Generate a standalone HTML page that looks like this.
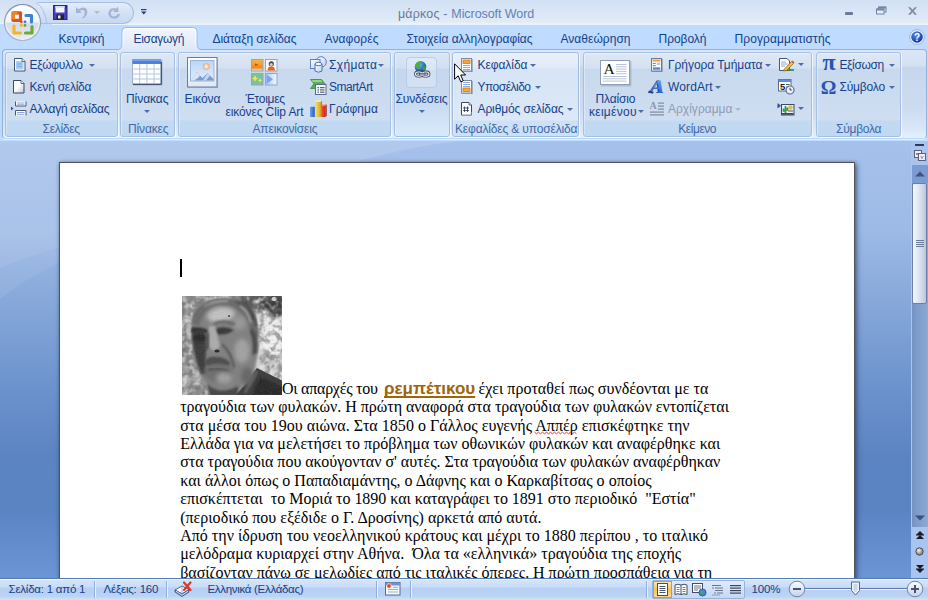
<!DOCTYPE html>
<html><head><meta charset="utf-8">
<style>
*{margin:0;padding:0;box-sizing:border-box}
html,body{width:928px;height:600px;overflow:hidden;background:#bfdbff;font-family:"Liberation Sans",sans-serif;font-size:12px;color:#15428b}
.abs{position:absolute}
#title{position:absolute;left:0;top:0;width:928px;height:25px;background:linear-gradient(#d2e0f4 0,#d8e5f6 10px,#e1ebf8 22px,#ecf3fb 24px,#ecf3fb 25px)}
#titletxt{position:absolute;left:0;width:928px;top:6px;text-align:center;font-size:12.5px;color:#5b6f8f;padding-left:2px}
#tabs{position:absolute;left:0;top:25px;width:928px;height:25px;background:#bfdbff}
.tab{position:absolute;top:6px;font-size:12px;color:#15428b;white-space:nowrap}
#acttab{position:absolute;left:122px;top:27px;width:75px;height:23px;border:1px solid #8db2e3;border-bottom:none;border-radius:4px 4px 0 0;background:linear-gradient(#f4f8fd,#dfe9f6)}
#ribbon{position:absolute;left:2px;top:49px;width:925px;height:90px;border:1px solid #8db2e3;border-bottom-color:#b9d9f5;border-radius:4px;background:linear-gradient(#dbe6f5 0,#d4e1f2 16px,#c6d7ed 17px,#ccdbf0 58px,#d8e6f7 78px,#e4f1fd 89px);box-shadow:0 1px 0 #dff1ff}
.grp{position:absolute;top:52px;height:85px;border:1px solid #a5c0e2;border-radius:3px;background:linear-gradient(#dee8f5 0,#d4e1f2 15px,#c8d9ee 16px,#cfdef1 67px,#c2d9f2 68px,#c0d8f1 85px);box-shadow:1px 1px 0 rgba(255,255,255,.65), inset 1px 1px 0 rgba(255,255,255,.35)}
.glab{position:absolute;left:0;right:0;bottom:0;height:15px;line-height:15px;text-align:center;font-size:12px;color:#3e6aaa;white-space:nowrap}
.t{position:absolute;white-space:nowrap;font-size:12px;color:#15428b;line-height:14px}
.arr{position:absolute;width:0;height:0;border-left:3px solid transparent;border-right:3px solid transparent;border-top:3.5px solid #4b6ea9}
#doc{position:absolute;left:0;top:141px;width:928px;height:437px;background:linear-gradient(#a6c1eb 0,#9dbae6 90px,#87a8da 160px,#6e94ce 240px,#5c84c2 315px,#5b84c4 370px,#6b95d5 437px);overflow:hidden}
#page{position:absolute;left:59px;top:21px;width:796px;height:430px;background:#fff;border:1px solid #505358;box-shadow:2px 2px 5px rgba(30,50,90,.6),0 0 3px rgba(30,50,90,.3)}
.ln{position:absolute;left:180px;white-space:pre;font-family:"Liberation Serif",serif;font-size:16px;color:#000;line-height:18px;word-spacing:0px}
#status{position:absolute;left:0;top:578px;width:928px;height:22px;background:linear-gradient(#eef5fd 0,#eef5fd 1px,#d5e5f9 1px,#c9dcf6 8px,#b6cff2 9px,#bad3f4 17px,#d2e3f8 21px);border-top:1px solid #567db1}
.st{position:absolute;top:4px;font-size:11.5px;color:#15428b;white-space:nowrap}
</style></head><body>
<div id="title"></div>
<div id="tabs"></div>
<!-- QAT pill -->
<div class="abs" style="left:38px;top:2px;width:96px;height:22px;border:1px solid #a3bfe6;border-left:none;border-radius:0 11px 11px 0;background:linear-gradient(#e4edf9,#d2e1f5 50%,#c6d9f2)"></div>
<!-- office button notch -->
<div class="abs" style="left:0;top:24px;width:52px;height:26px;background:#bfdbff"></div>
<svg class="abs" style="left:0;top:0" width="60" height="52" viewBox="0 0 60 52">
<defs>
<linearGradient id="ob" x1="0" y1="0" x2="0" y2="1"><stop offset="0" stop-color="#ffffff"/><stop offset=".48" stop-color="#f1f4f9"/><stop offset=".52" stop-color="#d3dbe8"/><stop offset="1" stop-color="#e6ebf3"/></linearGradient>
<linearGradient id="obr" x1="0" y1="0" x2="0" y2="1"><stop offset="0" stop-color="#7f8ca3"/><stop offset="1" stop-color="#aab6ca"/></linearGradient>
</defs>
<path d="M36 2.500 Q45 8 47 24" fill="none" stroke="#a9c2e6" stroke-width="1"/>
<circle cx="22.500" cy="22.500" r="18.600" fill="url(#obr)"/>
<circle cx="22.500" cy="22.500" r="17.400" fill="#f4f6fa"/>
<circle cx="22.500" cy="22.500" r="16.300" fill="url(#ob)"/>
<g fill="none" stroke-width="3.200" stroke-linejoin="round" stroke-linecap="round">
<path d="M13 12.800 h7.500 v7.500 h-7.500z" stroke="#d9531e"/>
<path d="M26 15.500 h5.500 v6.500" stroke="#3d84cc"/>
<path d="M14 26 v7 h6.500" stroke="#f3b52c"/>
<path d="M25.500 33 h6.500 v-6.500" stroke="#6aa93b"/>
</g>
<path d="M12.200 12 h5 v2.500 h-2.300 v5 h-2.700z" fill="#ef8a1e"/>
<circle cx="21.300" cy="21.800" r="1.400" fill="#e64a19"/><circle cx="25" cy="21.800" r="1.400" fill="#2f7fd0"/>
<circle cx="21.300" cy="25.400" r="1.400" fill="#f5b400"/><circle cx="25" cy="25.400" r="1.400" fill="#5fa534"/>
</svg>
<!-- save -->
<svg class="abs" style="left:53px;top:5px" width="15" height="15" viewBox="0 0 15 15">
<rect x=".5" y=".5" width="13.500" height="14" fill="#4b3fbf" stroke="#2c2486" stroke-width="1"/>
<rect x="2.500" y="1" width="9" height="6.500" fill="#f4f6fb"/><rect x="2.500" y="1" width="9" height="2" fill="#d9dff0"/>
<rect x="3.500" y="9.500" width="7.500" height="5" fill="#22232e"/><rect x="5" y="10.500" width="2.500" height="3" fill="#e8e8f0"/>
<rect x="12" y="1.500" width="1.300" height="2" fill="#2a2280"/>
</svg>
<!-- undo (disabled) -->
<svg class="abs" style="left:75px;top:6px" width="14" height="13" viewBox="0 0 14 13">
<path d="M1 1 L1 7 L7 7 L4.800 4.900 Q8.500 2.500 9.600 5.800 Q10.300 9 7 12 L8.800 12.400 Q13.500 8.500 12 4 Q9.800 -0.500 3.300 3.300Z" fill="#a3b5d3"/>
</svg>
<div class="arr" style="left:94px;top:11px;border-top-color:#b3b9c6"></div>
<!-- redo (disabled) -->
<svg class="abs" style="left:107px;top:6px" width="14" height="13" viewBox="0 0 14 13">
<path d="M11 0.500 L11.500 6 L6 6 L8 4.300 Q4.500 3.500 3.800 7 Q3.800 10.500 7.200 10.500 Q10 10.300 10.500 8 L13 8 Q12.300 12.800 7 12.800 Q1.300 12.300 1.300 7 Q2.200 1 9.300 2.400Z" fill="#a3b5d3"/>
</svg>
<!-- customize -->
<svg class="abs" style="left:140px;top:8px" width="8" height="8" viewBox="0 0 8 8"><rect x="1" y="1" width="5.500" height="1.200" fill="#1e3f7b"/><path d="M1 3.500 h5.500 l-2.750 3z" fill="#1e3f7b"/></svg>
<!-- window controls -->
<div class="abs" style="left:845px;top:12px;width:8px;height:3px;background:#6a7b98;border-radius:1px"></div>
<svg class="abs" style="left:875px;top:6px" width="12" height="9" viewBox="0 0 12 9">
<rect x="3.500" y="1" width="7.500" height="5" fill="none" stroke="#7385a3" stroke-width="1"/><rect x="3.500" y=".7" width="7.500" height="1.800" fill="#7385a3"/>
<rect x="1.500" y="3" width="7.500" height="5" fill="#e3ecf8" stroke="#7385a3" stroke-width="1"/><rect x="1.500" y="2.700" width="7.500" height="1.800" fill="#7385a3"/>
</svg>
<svg class="abs" style="left:907px;top:6px" width="11" height="10" viewBox="0 0 11 10">
<path d="M1 1.200 L3.400 1.200 L5.500 3.800 L7.600 1.200 L10 1.200 L6.700 5 L10 8.800 L7.600 8.800 L5.500 6.200 L3.400 8.800 L1 8.800 L4.300 5Z" fill="#7f8ca5"/>
</svg>
<!-- help -->
<svg class="abs" style="left:909px;top:29px" width="16" height="16" viewBox="0 0 16 16">
<defs><radialGradient id="hg" cx="40%" cy="30%" r="70%"><stop offset="0" stop-color="#5b8ef0"/><stop offset="1" stop-color="#12349a"/></radialGradient></defs>
<circle cx="8" cy="8" r="7.300" fill="#f5f8fd" stroke="#8aa3cf" stroke-width=".8"/><circle cx="8" cy="8" r="5.800" fill="url(#hg)"/>
<text x="8" y="11.600" font-family="Liberation Sans" font-weight="bold" font-size="10" text-anchor="middle" fill="#fff">?</text>
</svg>

<div id="ribbon"></div>
<svg class="abs" style="left:116px;top:25px" width="88" height="27" viewBox="0 0 88 27">
<defs><linearGradient id="tg" x1="0" y1="0" x2="0" y2="1"><stop offset="0" stop-color="#f3f7fd"/><stop offset=".5" stop-color="#e7eef9"/><stop offset="1" stop-color="#dbe6f5"/></linearGradient></defs>
<path d="M1.500 25 Q5.500 24.500 6 20 V6.500 Q6 2.500 10 2.500 H77 Q81 2.500 81 6.500 V20 Q81.500 24.500 85.500 25 V27 H1.500Z" fill="url(#tg)"/>
<path d="M1.500 25 Q5.500 24.500 6 20 V6.500 Q6 2.500 10 2.500 H77 Q81 2.500 81 6.500 V20 Q81.500 24.500 85.500 25" fill="none" stroke="#97bae8" stroke-width="1"/>
<path d="M7.200 21 V7 Q7.200 3.700 10.500 3.700 H76.500 Q79.800 3.700 79.800 7 V21" fill="none" stroke="#ffffff" stroke-width="1" opacity=".8"/>
</svg>
<!-- groups -->
<div class="grp" id="g1" style="left:5px;width:113px"></div>
<div class="grp" id="g2" style="left:120px;width:55px"></div>
<div class="grp" id="g3" style="left:178px;width:213px"></div>
<div class="grp" id="g4" style="left:394px;width:56px;background:linear-gradient(#dbe6f5 0,#d2e0f2 15px,#c5d7ee 16px,#c8daf0 50px,#d9ebfb 85px);border-color:#9fc0e4"></div>
<div class="grp" id="g5" style="left:452px;width:127px;background:linear-gradient(#e9f0fa 0,#e0eaf7 15px,#d6e4f5 16px,#dce8f7 67px,#cfe0f6 68px,#cde0f6 85px);border-color:#a0bde0"></div>
<div class="grp" id="g6" style="left:583px;width:229px"></div>
<div class="grp" id="g7" style="left:816px;width:85px"></div>
<!-- cover page -->
<svg class="abs" style="left:14px;top:58px" width="12" height="14" viewBox="0 0 12 14">
<path d="M.5 .5 H8 L11 3.500 V13 H.5Z" fill="#fff" stroke="#44546f" stroke-width="1"/>
<rect x="2" y="3" width="7.500" height="8.500" fill="#a9cdf6"/><rect x="3" y="5.500" width="5" height="1" fill="#7fa9dd"/><rect x="3" y="8" width="5" height="1" fill="#7fa9dd"/>
<path d="M8 .5 V3.500 H11" fill="#e8eef8" stroke="#44546f" stroke-width=".8"/>
</svg>
<!-- blank page -->
<svg class="abs" style="left:13px;top:80px" width="12" height="14" viewBox="0 0 12 14">
<defs><linearGradient id="bp" x1="0" y1="0" x2="1" y2="1"><stop offset=".45" stop-color="#fff"/><stop offset="1" stop-color="#bcc5d6"/></linearGradient></defs>
<path d="M.5 .5 H8 L11 3.500 V13 H.5Z" fill="url(#bp)" stroke="#3d4960" stroke-width="1"/>
<path d="M8 .5 V3.500 H11" fill="#f4f6fa" stroke="#3d4960" stroke-width=".8"/>
</svg>
<!-- page break -->
<svg class="abs" style="left:10px;top:101px" width="18" height="15" viewBox="0 0 18 15">
<path d="M1 5.500 L3.500 7.500 L1 9.500Z" fill="#2b4fa8"/>
<path d="M5.500 .5 V5 H16 V.5" fill="#fff" stroke="#4a5875" stroke-width="1"/>
<rect x="7" y="1.500" width="7.500" height="1" fill="#8da6d6"/><rect x="7" y="3.300" width="7.500" height="1" fill="#8da6d6"/>
<path d="M5.500 14.500 V9.500 H16 V14.500" fill="#fff" stroke="#4a5875" stroke-width="1"/>
<rect x="7" y="11" width="7.500" height="1" fill="#8da6d6"/><rect x="7" y="12.800" width="7.500" height="1" fill="#8da6d6"/>
</svg>
<div class="arr" style="left:89px;top:64px"></div>
<!-- table -->
<svg class="abs" style="left:132px;top:59px" width="31" height="27" viewBox="0 0 31 27">
<rect x="1.500" y="1.500" width="29" height="25" fill="#5f6f8e" opacity=".35"/>
<rect x=".5" y=".5" width="28.500" height="24.500" fill="#fdfeff" stroke="#9fb0cc" stroke-width="1"/>
<rect x=".5" y=".5" width="28.500" height="4.500" fill="#4d7fdc"/><rect x=".5" y=".5" width="28.500" height="1.500" fill="#7ba3ea"/>
<g stroke="#b8c6de" stroke-width="1"><path d="M7.700 5 V25 M14.900 5 V25 M22.100 5 V25 M.5 10 H29 M.5 15 H29 M.5 20 H29"/></g>
<path d="M29.300 3 V25.300 H1" fill="none" stroke="#2f3f60" stroke-width="1"/>
</svg>
<div class="arr" style="left:143.500px;top:110px"></div>
<!-- picture -->
<svg class="abs" style="left:186px;top:56px" width="33" height="33" viewBox="0 0 33 33">
<defs><linearGradient id="sky" x1="0" y1="0" x2="0" y2="1"><stop offset="0" stop-color="#b9d6f8"/><stop offset="1" stop-color="#e2effc"/></linearGradient>
<radialGradient id="sun"><stop offset="0" stop-color="#fff6e6"/><stop offset=".6" stop-color="#fbd3b0"/><stop offset="1" stop-color="#ee9a6a"/></radialGradient>
<linearGradient id="fr" x1="0" y1="0" x2="0" y2="1"><stop offset="0" stop-color="#ffffff"/><stop offset="1" stop-color="#dfe8f5"/></linearGradient></defs>
<rect x="2" y="2" width="30" height="30" fill="#5a6c8e" opacity=".3"/>
<rect x="1.500" y="1.500" width="29.500" height="29.500" fill="url(#fr)" stroke="#6c7c99" stroke-width="1"/>
<rect x="4.500" y="4.500" width="23.500" height="20.500" fill="url(#sky)" stroke="#9db3d6" stroke-width="1"/>
<path d="M5 24.500 L11 16 L14 19.500 L16.500 22 L21.500 17 L27.500 23 V24.500Z" fill="#7d9bd0"/>
<path d="M11 16 L14 19.500 L12 22 L8 24.500 H5Z" fill="#d9e5f6"/><path d="M21.500 17 L24 19.500 L20 24.500 H17Z" fill="#c4d5f0"/>
<circle cx="20.300" cy="10.500" r="3.300" fill="url(#sun)"/>
</svg>
<!-- clip art -->
<svg class="abs" style="left:251px;top:59px" width="27" height="27" viewBox="0 0 27 27">
<defs><linearGradient id="ca1" x1="0" y1="0" x2="0" y2="1"><stop offset="0" stop-color="#f8b84a"/><stop offset=".7" stop-color="#f08a1a"/><stop offset="1" stop-color="#fbe3b8"/></linearGradient>
<linearGradient id="ca4" x1="0" y1="0" x2="1" y2="0"><stop offset="0" stop-color="#a9c6f5"/><stop offset="1" stop-color="#f4f8ff"/></linearGradient></defs>
<g stroke="#97a6bf" stroke-width="1">
<rect x=".5" y=".5" width="11.500" height="11.500" fill="url(#ca1)"/>
<rect x="14.500" y=".5" width="11.500" height="11.500" fill="#fbfcfe"/>
<rect x=".5" y="14.500" width="11.500" height="11.500" fill="#79c29a"/>
<rect x="14.500" y="14.500" width="11.500" height="11.500" fill="url(#ca4)"/></g>
<path d="M4 4.500 L7.500 6 L4 7Z" fill="#c9460e"/>
<circle cx="20.300" cy="4.800" r="2.600" fill="#4a4a4a"/><path d="M16.500 11.500 Q16.500 7.500 20.300 7.500 Q24 7.500 24 11.500Z" fill="#e8651c"/><circle cx="20.300" cy="5.500" r="1.500" fill="#f0c9a8"/>
<path d="M4 16 l1 2.500 2.500 1 -2.500 1 -1 2.500 -1 -2.500 -2 -1 2 -1z M9 19 l.7 1.500 1.500 .7 -1.500 .7 -.7 1.500 -.7 -1.500 -1.500 -.7 1.500 -.7z" fill="#f6e45a"/>
<path d="M15.500 15.500 L22 20.300 L15.500 25Z" fill="#7fa4ea"/>
</svg>
<!-- shapes -->
<svg class="abs" style="left:309px;top:56px" width="19" height="18" viewBox="0 0 19 18">
<defs><linearGradient id="sh" x1="0" y1="0" x2="1" y2="1"><stop offset="0" stop-color="#ffffff"/><stop offset="1" stop-color="#bcd2f2"/></linearGradient></defs>
<circle cx="12" cy="6" r="5.300" fill="url(#sh)" stroke="#5d82bd" stroke-width="1"/>
<rect x="1.500" y="3.500" width="9.500" height="9" fill="url(#sh)" stroke="#5d82bd" stroke-width="1"/>
<path d="M6 8 V15 Q9.500 17.500 13 15 V8" fill="url(#sh)" stroke="#4f74b2" stroke-width="1"/>
<ellipse cx="9.500" cy="8" rx="3.500" ry="1.700" fill="#f5f9ff" stroke="#4f74b2" stroke-width="1"/>
</svg>
<div class="arr" style="left:378px;top:64px"></div>
<!-- smartart -->
<svg class="abs" style="left:310px;top:79px" width="17" height="16" viewBox="0 0 17 16">
<path d="M.5 .5 H11.500 L15 4.800 L11.500 9.500 H.5 L4 4.800Z" fill="#58b055" stroke="#3a8a3a" stroke-width=".8"/>
<path d="M1.500 1 H11 L12.500 3 H3Z" fill="#8fd488"/>
<rect x="5.500" y="5.500" width="10.500" height="10" fill="#f2f6fb" stroke="#5b6b85" stroke-width="1"/>
<g fill="#56657f"><rect x="7.500" y="8" width="1.500" height="1.200"/><rect x="10" y="8" width="4.500" height="1.200"/><rect x="7.500" y="10.300" width="1.500" height="1.200"/><rect x="10" y="10.300" width="4.500" height="1.200"/><rect x="7.500" y="12.600" width="1.500" height="1.200"/><rect x="10" y="12.600" width="4.500" height="1.200"/></g>
</svg>
<!-- chart -->
<svg class="abs" style="left:309px;top:100px" width="18" height="18" viewBox="0 0 18 18">
<defs><linearGradient id="cb" x1="0" y1="0" x2="1" y2="0"><stop offset="0" stop-color="#6aa4ee"/><stop offset="1" stop-color="#1f5fc0"/></linearGradient>
<linearGradient id="cy" x1="0" y1="0" x2="1" y2="0"><stop offset="0" stop-color="#fbe07a"/><stop offset="1" stop-color="#e0a510"/></linearGradient>
<linearGradient id="cr" x1="0" y1="0" x2="1" y2="0"><stop offset="0" stop-color="#f4674a"/><stop offset="1" stop-color="#c42616"/></linearGradient></defs>
<rect x="1" y="7" width="4.800" height="10" fill="url(#cb)"/><path d="M1 7 l1.200 -1.200 h4.800 l-1.200 1.200z" fill="#a6c8f6"/>
<rect x="11.500" y="5.500" width="5" height="11.500" fill="url(#cr)"/><path d="M11.500 5.500 l1.200 -1.300 h4.800 l-1.200 1.300z" fill="#f99c86"/><path d="M16.500 5.500 l1.200 -1.300 v11.500 l-1.200 1.300z" fill="#a01c10"/>
<rect x="6" y="1.800" width="5.800" height="15.200" fill="url(#cy)"/><path d="M6 1.800 l1.200 -1.300 h5.800 l-1.200 1.300z" fill="#fdf0b0"/><path d="M11.800 1.800 l1.200 -1.300 v15 l-1.200 1.500z" fill="#b98508"/>
</svg>

<!-- links button -->
<div class="abs" style="left:406px;top:57px;width:31px;height:31px;border:1px solid #bacde6;border-radius:4px;background:linear-gradient(#e0eaf7 0,#dae6f5 11px,#d0dff2 12px,#d3e1f3 31px)"></div>
<svg class="abs" style="left:412px;top:60px" width="20" height="19" viewBox="0 0 20 19">
<defs><radialGradient id="gl" cx="35%" cy="30%" r="75%"><stop offset="0" stop-color="#8ec8ff"/><stop offset=".6" stop-color="#2d6fd0"/><stop offset="1" stop-color="#173f8e"/></radialGradient></defs>
<circle cx="8.500" cy="6.800" r="5.800" fill="url(#gl)"/>
<path d="M4.500 3 Q7 .8 9.500 1.300 L10.500 3.500 L8 5 L8.500 7.500 L6 9.500 L4 7 L3 5Z" fill="#4bb13c"/><path d="M11 6.500 L13.500 6 L14 8.500 L12 11 L10.500 9Z" fill="#3fa032"/>
<g fill="none" stroke="#3c4252" stroke-width="2.800"><rect x="3.500" y="12" width="6.500" height="4.200" rx="2.100"/><rect x="10.500" y="12" width="6.500" height="4.200" rx="2.100"/></g>
<g fill="none" stroke="#e8ecf3" stroke-width="1.200"><rect x="3.500" y="12" width="6.500" height="4.200" rx="2.100"/><rect x="10.500" y="12" width="6.500" height="4.200" rx="2.100"/></g>
<rect x="7.500" y="13.300" width="5.500" height="1.600" fill="#d5dae4" stroke="#3c4252" stroke-width=".6"/>
</svg>
<div class="arr" style="left:418.500px;top:110px"></div>
<!-- header -->
<svg class="abs" style="left:461px;top:58px" width="12" height="14" viewBox="0 0 12 14">
<rect x="1" y="1" width="10.800" height="13" fill="#56657f" opacity=".5"/>
<rect x=".5" y=".5" width="10" height="12.500" fill="#fff" stroke="#7a89a5" stroke-width="1"/>
<rect x="2" y="2" width="7" height="3.500" fill="#f6a63a" stroke="#d07a10" stroke-width=".8"/>
<g fill="#8fa9d8"><rect x="2" y="7" width="7" height="1"/><rect x="2" y="9" width="7" height="1"/><rect x="2" y="11" width="7" height="1"/></g>
</svg>
<!-- footer -->
<svg class="abs" style="left:461px;top:80px" width="12" height="14" viewBox="0 0 12 14">
<rect x="1" y="1" width="10.800" height="13" fill="#56657f" opacity=".5"/>
<rect x=".5" y=".5" width="10" height="12.500" fill="#fff" stroke="#7a89a5" stroke-width="1"/>
<rect x="2" y="8" width="7" height="3.500" fill="#f6a63a" stroke="#d07a10" stroke-width=".8"/>
<g fill="#8fa9d8"><rect x="2" y="2" width="7" height="1"/><rect x="2" y="4" width="7" height="1"/><rect x="2" y="6" width="7" height="1"/></g>
</svg>
<!-- page number -->
<svg class="abs" style="left:461px;top:102px" width="12" height="14" viewBox="0 0 12 14">
<path d="M.5 .5 H8 L10.500 3 V13 H.5Z" fill="#fff" stroke="#3d4960" stroke-width="1"/>
<path d="M8 .5 V3 H10.500" fill="#e8eef8" stroke="#3d4960" stroke-width=".8"/>
<g stroke="#2a3550" stroke-width=".8" fill="none"><path d="M3.500 4.500 V10 M6.500 4.500 V10 M2 6 H8 M2 8.500 H8"/></g>
<path d="M1 12.500 H10 V10" fill="none" stroke="#c3ccdb" stroke-width="1"/>
</svg>
<div class="arr" style="left:530px;top:64px"></div>
<div class="arr" style="left:534.500px;top:86px"></div>
<div class="arr" style="left:566.500px;top:108px"></div>
<!-- text box -->
<svg class="abs" style="left:599px;top:59px" width="33" height="28" viewBox="0 0 33 28">
<rect x="2" y="2" width="30.500" height="25.500" fill="#5a6c8e" opacity=".28"/>
<rect x="1.500" y="1.500" width="29" height="24" fill="#fff" stroke="#8e9cb5" stroke-width="1"/>
<text x="4.500" y="15" font-family="Liberation Serif" font-size="15.500" fill="#111">A</text>
<g fill="#b9c5da"><rect x="17" y="5" width="10.500" height="1"/><rect x="17" y="7.300" width="10.500" height="1"/><rect x="17" y="9.600" width="10.500" height="1"/><rect x="17" y="11.900" width="10.500" height="1"/><rect x="17" y="14.200" width="10.500" height="1"/>
<rect x="4" y="17" width="23.500" height="1"/><rect x="4" y="19.300" width="23.500" height="1"/><rect x="4" y="21.600" width="23.500" height="1"/></g>
</svg>
<div class="arr" style="left:637.500px;top:110px"></div>
<!-- quick parts -->
<svg class="abs" style="left:651px;top:58px" width="12" height="14" viewBox="0 0 12 14">
<rect x="1" y="1" width="10.800" height="13" fill="#56657f" opacity=".5"/>
<rect x=".5" y=".5" width="10" height="12.500" fill="#fff" stroke="#6c7a95" stroke-width="1"/>
<rect x="1.500" y="1.500" width="8" height="2" fill="#f79a2c"/>
<rect x="1.800" y="4.800" width="3" height="1.200" fill="#6d8fd0"/><rect x="5.800" y="4.500" width="3.500" height="2.600" fill="#b7c9ea"/>
<rect x="1.800" y="7" width="3" height="1.200" fill="#6d8fd0"/><rect x="1.800" y="9.300" width="7.500" height="2.500" fill="#5b8ae0"/>
</svg>
<div class="arr" style="left:765px;top:64px"></div>
<!-- wordart -->
<svg class="abs" style="left:647px;top:77px" width="20" height="19" viewBox="0 0 20 19">
<defs><linearGradient id="wa" x1="0" y1="0" x2="0" y2="1"><stop offset="0" stop-color="#7fb0f5"/><stop offset="1" stop-color="#1d53b8"/></linearGradient></defs>
<g transform="skewX(-14)">
<text x="5.200" y="16.300" font-family="Liberation Serif" font-weight="bold" font-size="19" fill="#173f92">A</text>
<text x="6.200" y="15.800" font-family="Liberation Serif" font-weight="bold" font-size="19" fill="url(#wa)">A</text>
</g>
<path d="M2 13.500 L6.500 14.800 L5.800 16.800 L1 15.500Z" fill="#1a469c"/>
</svg>
<div class="arr" style="left:715px;top:86px"></div>
<!-- drop cap (disabled) -->
<svg class="abs" style="left:649px;top:101px" width="16" height="15" viewBox="0 0 16 15">
<text x=".5" y="8" font-family="Liberation Serif" font-weight="bold" font-size="10" fill="#8b97ad">A</text>
<g fill="#7d8aa3"><rect x="9" y="1.500" width="6" height="1.200"/><rect x="9" y="4.500" width="6" height="1.200"/><rect x="9" y="7.500" width="6" height="1.200"/><rect x="1" y="10.500" width="14" height="1.200"/><rect x="1" y="13.300" width="14" height="1.200"/></g>
</svg>
<div class="arr" style="left:735px;top:108px;border-top-color:#aab6cb"></div>
<!-- signature line -->
<svg class="abs" style="left:779px;top:58px" width="16" height="14" viewBox="0 0 16 14">
<path d="M.5 .5 H8 L10.500 3 V12.500 H.5Z" fill="#fff" stroke="#4a5875" stroke-width="1"/>
<g fill="#9aa8c2"><rect x="2" y="3.500" width="5" height="1"/><rect x="2" y="5.500" width="6.500" height="1"/><rect x="2" y="7.500" width="4" height="1"/></g>
<path d="M5 11.500 L12.500 3.500 L14.500 5.500 L7.500 12.500 L4.500 13Z" fill="#f3c23c" stroke="#7a5a10" stroke-width=".7"/>
<path d="M12.500 3.500 L13.500 2.500 L15.500 4.500 L14.500 5.500Z" fill="#d6534a"/>
<path d="M9 12 L15 12" stroke="#2e8a3a" stroke-width="1.600"/>
</svg>
<div class="arr" style="left:797.500px;top:63px"></div>
<!-- date & time -->
<svg class="abs" style="left:778px;top:79px" width="17" height="16" viewBox="0 0 17 16">
<rect x=".5" y=".5" width="12.500" height="11.500" fill="#fff" stroke="#5b6b88" stroke-width="1"/>
<rect x=".5" y=".5" width="12.500" height="2.500" fill="#5d8ae0"/>
<text x="2" y="11" font-family="Liberation Sans" font-weight="bold" font-size="9.500" fill="#222">5</text>
<rect x="8" y="5" width="3.500" height="1" fill="#555"/><rect x="8" y="7.500" width="3.500" height="1" fill="#555"/>
<circle cx="12" cy="11" r="4" fill="#e9eef8" stroke="#5a6d94" stroke-width="1.200"/><path d="M12 8.800 V11 H13.800" stroke="#334" stroke-width=".9" fill="none"/>
</svg>
<!-- object -->
<svg class="abs" style="left:777px;top:102px" width="18" height="14" viewBox="0 0 18 14">
<path d="M.5 1 L4 3.800 L.5 6.500Z" fill="#2b4fa8"/>
<rect x="4.500" y="2.500" width="12.500" height="10.500" fill="#eef2f8" stroke="#3c4a66" stroke-width="1"/>
<path d="M8.500 12 V6 M8.500 4 V12 M6.500 6.500 V9 H8.500 M10.500 5.500 V8 H8.500" stroke="#2e9a3c" stroke-width="1.700" fill="none"/>
<circle cx="13.500" cy="5.500" r="1.800" fill="#f5c542" stroke="#b58a10" stroke-width=".5"/>
<rect x="5" y="11" width="11.500" height="1.800" fill="#3c4a66"/><rect x="11" y="8.500" width="5" height="1" fill="#555"/>
</svg>
<div class="arr" style="left:797.500px;top:107px"></div>
<!-- pi & omega -->
<div class="abs" id="pi" style="left:820px;top:52px;width:18px;height:20px;font-family:'Liberation Serif',serif;font-size:24px;line-height:20px;color:#2456b0;text-align:center;font-weight:bold">π</div>
<div class="abs" id="om" style="left:820px;top:77.5px;width:17px;height:20px;font-family:'Liberation Serif',serif;font-size:19.500px;line-height:20px;color:#2456b0;text-align:center;font-weight:bold">Ω</div>
<div class="arr" style="left:888.500px;top:64px"></div>
<div class="arr" style="left:888.500px;top:86px"></div>
<!-- mouse cursor -->
<svg class="abs" style="left:454px;top:63px;z-index:50" width="13" height="20" viewBox="0 0 13 20">
<path d="M.6 .8 V16.200 L4.200 12.800 L6.800 18.800 L9.200 17.800 L6.700 12 H11.600Z" fill="#fff" stroke="#000" stroke-width="1" stroke-linejoin="miter"/>
</svg>

<!-- DOC -->
<div id="doc">
<svg class="abs" style="left:0;top:0" width="928" height="437" viewBox="0 0 928 437">
<path d="M0 0 H462 Q405 6 356 21 Q200 65 59 107 Q25 116 0 127Z" fill="#fff" opacity=".13"/>
<path d="M0 127 Q25 116 59 107 L59 121.500 Q25 138 0 158Z" fill="#fff" opacity=".07"/>
</svg>
 <div id="page"></div>

<svg id="photo" style="position:absolute;left:182px;top:155px" width="100" height="99" viewBox="0 0 100 99">
<defs>
<filter id="b05" x="-30%" y="-30%" width="160%" height="160%"><feGaussianBlur stdDeviation="0.6"/></filter>
<filter id="b1" x="-30%" y="-30%" width="160%" height="160%"><feGaussianBlur stdDeviation="1.1"/></filter>
<filter id="b2" x="-30%" y="-30%" width="160%" height="160%"><feGaussianBlur stdDeviation="2"/></filter>
<filter id="b4" x="-30%" y="-30%" width="160%" height="160%"><feGaussianBlur stdDeviation="3.500"/></filter>
<filter id="nzd" x="0" y="0" width="100%" height="100%"><feTurbulence type="fractalNoise" baseFrequency="0.17" numOctaves="2" seed="3"/><feColorMatrix type="matrix" values="0 0 0 0 0.15  0 0 0 0 0.15  0 0 0 0 0.15  3 3 0 0 -2.7"/></filter>
<filter id="nzl" x="0" y="0" width="100%" height="100%"><feTurbulence type="fractalNoise" baseFrequency="0.15" numOctaves="2" seed="11"/><feColorMatrix type="matrix" values="0 0 0 0 0.95  0 0 0 0 0.95  0 0 0 0 0.95  3 3 0 0 -2.9"/></filter>
<filter id="grain" x="0" y="0" width="100%" height="100%"><feTurbulence type="fractalNoise" baseFrequency="0.55" numOctaves="2" seed="5"/><feColorMatrix type="matrix" values="0 0 0 0 0.2  0 0 0 0 0.2  0 0 0 0 0.2  1.2 1.2 0 0 -1"/></filter>
<clipPath id="pc"><rect width="100" height="99"/></clipPath>
<clipPath id="bgc"><path d="M0 0 H100 V86 L77 72 Q80 40 70 14 Q58 0 35 3 Q12 6 10 24 Q8 50 17 75 Q22 90 32 99 H0Z"/></clipPath>
</defs>
<g clip-path="url(#pc)">
<rect width="100" height="99" fill="#9b9b9b"/>
<!-- light bg right -->
<path d="M72 18 H102 V90 L74 74Z" fill="#e2e2e2" filter="url(#b2)"/>
<ellipse cx="91" cy="42" rx="10" ry="21" fill="#f2f2f2" filter="url(#b2)"/>
<ellipse cx="84" cy="63" rx="6" ry="7" fill="#a6a6a6" filter="url(#b2)"/>
<ellipse cx="96" cy="70" rx="5" ry="6" fill="#b4b4b4" filter="url(#b2)"/>
<!-- left bg -->
<ellipse cx="4" cy="30" rx="6" ry="13" fill="#bdbdbd" filter="url(#b2)"/>
<ellipse cx="4" cy="58" rx="7" ry="9" fill="#858585" filter="url(#b2)"/>
<ellipse cx="8" cy="84" rx="9" ry="10" fill="#a9a9a9" filter="url(#b2)"/>
<ellipse cx="18" cy="95" rx="8" ry="5" fill="#8b8b8b" filter="url(#b2)"/>
<!-- top leaves -->
<rect x="-2" y="-3" width="18" height="12" fill="#8a8a8a" filter="url(#b2)"/>
<rect x="58" y="-4" width="46" height="17" fill="#585858" filter="url(#b2)"/>
<ellipse cx="90" cy="8" rx="12" ry="9" fill="#3c3c3c" filter="url(#b2)"/>
<ellipse cx="95" cy="14" rx="6" ry="8" fill="#3e3e3e" filter="url(#b1)"/>
<ellipse cx="82" cy="17" rx="4" ry="3" fill="#e8e8e8" filter="url(#b1)"/><ellipse cx="74" cy="6" rx="3" ry="2" fill="#dedede" filter="url(#b1)"/><ellipse cx="92" cy="3" rx="2.500" ry="2" fill="#e2e2e2" filter="url(#b05)"/>
<g clip-path="url(#bgc)">
<rect x="0" y="0" width="100" height="99" filter="url(#nzd)" opacity=".6"/>
<rect x="0" y="0" width="100" height="99" filter="url(#nzl)" opacity=".5"/>
</g>
<!-- clothes -->
<path d="M54 99 L63 88 L75 72 L101 85 V99Z" fill="#3c3c3c" filter="url(#b05)"/>
<path d="M70 99 L78 81 L101 91 V99Z" fill="#2a2a2a" filter="url(#b1)"/>
<path d="M63 97 L75 75" stroke="#707070" stroke-width="2" filter="url(#b1)"/>
<!-- head -->
<path d="M10 24 Q12 6 35 3 Q58 0 70 14 Q79 32 76 56 Q73 76 62 90 Q50 100 38 99 Q24 92 17 75 Q8 50 10 24Z" fill="#828282" filter="url(#b1)"/>
<!-- hair -->
<path d="M10 28 Q11 8 32 4 Q52 -1 68 11 L64 18 Q50 8 34 10 Q22 13 17 30Z" fill="#6c6c6c" filter="url(#b1)"/>
<path d="M50 4 Q64 4 71 16 Q77 28 76 42 L68 36 Q67 22 54 12Z" fill="#6a6a6a" filter="url(#b1)"/>
<path d="M54 6 Q66 9 71 24 M60 5 Q72 12 74 30" stroke="#444" stroke-width="1.800" fill="none" filter="url(#b1)"/>
<path d="M58 10 Q66 14 69 27 M22 10 Q32 5 46 5" stroke="#b2b2b2" stroke-width="1.600" fill="none" filter="url(#b1)"/>
<path d="M14 20 Q18 10 28 7" stroke="#6a6a6a" stroke-width="1.600" fill="none" filter="url(#b1)"/>
<!-- forehead -->
<ellipse cx="39" cy="19" rx="14" ry="7.500" fill="#c4c4c4" filter="url(#b2)" transform="rotate(-8 39 19)"/>
<ellipse cx="57" cy="27" rx="7" ry="7" fill="#9a9a9a" filter="url(#b2)"/>
<!-- ear / side hair dark -->
<path d="M70 32 Q77 40 75 57 L70 59 Q72 44 68 36Z" fill="#4a4a4a" filter="url(#b1)"/>
<!-- left face shadow -->
<path d="M10 30 Q14 34 22 36 L25 50 Q22 62 25 78 L19 78 Q9 54 10 30Z" fill="#3e3e3e" filter="url(#b1)"/>
<!-- right cheek -->
<ellipse cx="60" cy="55" rx="7.500" ry="12" fill="#a4a4a4" filter="url(#b2)"/>
<ellipse cx="65" cy="80" rx="6" ry="9" fill="#686868" filter="url(#b2)"/>
<!-- lower face darker -->
<ellipse cx="36" cy="76" rx="14" ry="10" fill="#6e6e6e" filter="url(#b2)"/>
<!-- brows & eyes -->
<path d="M9 33 Q16 29 26 34 L25 38 Q16 34 10 37Z" fill="#303030" filter="url(#b1)"/>
<ellipse cx="18" cy="42" rx="7" ry="4" fill="#2c2c2c" filter="url(#b1)"/>
<path d="M31 27 Q40 21 54 27 L52 30 Q40 26 32 30Z" fill="#6c6c6c" filter="url(#b1)"/>
<path d="M33 33 Q42 29 52 34 Q44 40 35 38Z" fill="#383838" filter="url(#b1)"/>
<circle cx="47" cy="20" r=".9" fill="#333"/>
<!-- nose -->
<path d="M27 30 L33 30 L38 50 Q36 55 30 54 L26 50Z" fill="#aeaeae" filter="url(#b1)"/>
<path d="M24 38 L27 36 L27 52 L23 54Z" fill="#505050" filter="url(#b1)"/>
<ellipse cx="35" cy="55" rx="2.600" ry="1.500" fill="#2c2c2c" filter="url(#b05)"/>
<path d="M40 48 Q50 58 52 72" stroke="#555" stroke-width="2.200" fill="none" filter="url(#b1)"/>
<!-- moustache -->
<path d="M22 66 Q26 60 34 61 Q43 60 49 68 L46 69.500 Q36 66 25 70Z" fill="#4e4e4e" filter="url(#b1)"/>
<path d="M26 74 Q36 71.500 46 75" stroke="#4a4a4a" stroke-width="1.800" fill="none" filter="url(#b1)"/>
<!-- chin -->
<ellipse cx="42" cy="82" rx="8" ry="5.500" fill="#a2a2a2" filter="url(#b2)"/>
<path d="M25 88 Q38 100 56 90 L56 100 H28Z" fill="#474747" filter="url(#b1)"/>
<rect width="100" height="99" filter="url(#grain)" opacity=".22"/>
</g>
</svg>


<div class="ln" id="l1a" style="left:282px;top:238.8px;letter-spacing:-0.26px">Οι απαρχές του </div>
<div class="ln" id="l1b" style="left:384px;top:238.8px;font-family:'Liberation Sans',sans-serif;font-weight:bold;font-size:17px;color:#a0650a;letter-spacing:0px;text-decoration:underline;text-decoration-thickness:1.5px;text-underline-offset:1.5px;text-decoration-skip-ink:none">ρεμπέτικου</div>
<div class="ln" id="l1c" style="left:478.5px;top:238.8px">έχει προταθεί πως συνδέονται με τα</div>
<svg class="abs" style="left:0;top:0" width="928" height="437"><polyline points="534.5 291.2 536.5 292.8 538.5 291.2 540.5 292.8 542.5 291.2 544.5 292.8 546.5 291.2 548.5 292.8 550.5 291.2 552.5 292.8 554.5 291.2 556.5 292.8 558.5 291.2 560.5 292.8 562.5 291.2 564.5 292.8 566.5 291.2 568.5 292.8 570.5 291.2 572.5 292.8 574.5 291.2 576.5 292.8" fill="none" stroke="#e0241a" stroke-width="0.9"/></svg>
<div id="caret" style="position:absolute;left:180px;top:118px;width:2px;height:18px;background:#000"></div>
<div class="ln" id="d0" style="left:180.2px;top:257.2px;letter-spacing:-0.011px">τραγούδια των φυλακών. Η πρώτη αναφορά στα τραγούδια των φυλακών εντοπίζεται</div>
<div class="ln" id="d1" style="left:180.2px;top:275.6px;letter-spacing:0.032px">στα μέσα του 19ου αιώνα. Στα 1850 ο Γάλλος ευγενής Αππέρ επισκέφτηκε την</div>
<div class="ln" id="d2" style="left:180.2px;top:294.0px;letter-spacing:0.010px">Ελλάδα για να μελετήσει το πρόβλημα των οθωνικών φυλακών και αναφέρθηκε και</div>
<div class="ln" id="d3" style="left:180.2px;top:312.4px;letter-spacing:-0.021px">στα τραγούδια που ακούγονταν σ&#x27; αυτές. Στα τραγούδια των φυλακών αναφέρθηκαν</div>
<div class="ln" id="d4" style="left:180.2px;top:330.8px;letter-spacing:0.022px">και άλλοι όπως ο Παπαδιαμάντης, ο Δάφνης και ο Καρκαβίτσας ο οποίος</div>
<div class="ln" id="d5" style="left:180.2px;top:349.2px;letter-spacing:-0.016px">επισκέπτεται  το Μοριά το 1890 και καταγράφει το 1891 στο περιοδικό  &quot;Εστία&quot;</div>
<div class="ln" id="d6" style="left:180.2px;top:367.6px;letter-spacing:0.004px">(περιοδικό που εξέδιδε ο Γ. Δροσίνης) αρκετά από αυτά.</div>
<div class="ln" id="d7" style="left:180.2px;top:386.0px;letter-spacing:0.005px">Από την ίδρυση του νεοελληνικού κράτους και μέχρι το 1880 περίπου , το ιταλικό</div>
<div class="ln" id="d8" style="left:180.2px;top:404.4px;letter-spacing:0.011px">μελόδραμα κυριαρχεί στην Αθήνα.  Όλα τα «ελληνικά» τραγούδια της εποχής</div>
<div class="ln" id="d9" style="left:180.2px;top:422.8px;letter-spacing:-0.026px">βασίζονταν πάνω σε μελωδίες από τις ιταλικές όπερες. Η πρώτη προσπάθεια για τη</div>
</div>
<!-- vertical scrollbar column (inside page coords) -->
<div class="abs" style="left:911px;top:141px;width:1px;height:437px;background:#a9c6f0"></div>
<div class="abs" style="left:912px;top:141px;width:16px;height:24px;background:#a9c5ef"></div>
<div class="abs" style="left:915px;top:144px;width:9px;height:2px;background:#2d3a57"></div>
<svg class="abs" style="left:913px;top:149px" width="14" height="13" viewBox="0 0 14 13">
<rect x="1.500" y="1.500" width="7" height="7" fill="#f4ecf2" stroke="#5a6079" stroke-width="1"/>
<rect x="5.500" y="4.500" width="7" height="7" fill="#f4ecf2" stroke="#5a6079" stroke-width="1"/>
<path d="M3 4 l2 2 M5 4 l-2 2 M7.500 7 l2 2.500 M10.500 7 l-2 2.500" stroke="#6b6f86" stroke-width=".8"/>
</svg>
<div class="abs" style="left:912px;top:165px;width:16px;height:362px;background:linear-gradient(90deg,#7292c4 0,#7c9bca 4px,#86a5d1 13px,#8eabd6 16px)"></div>
<div class="abs" style="left:912px;top:165px;width:16px;height:18px;background:#7b9cd2"></div>
<svg class="abs" style="left:915px;top:171px" width="10" height="6" viewBox="0 0 10 6"><path d="M0 5.500 L5 .5 L10 5.500Z" fill="#3e527a"/></svg>
<!-- thumb -->
<div class="abs" style="left:912px;top:183px;width:15px;height:121px;border:1px solid #6b80a8;border-radius:2px;background:linear-gradient(90deg,#f3f6fb 0,#e6ecf5 4px,#cfd9e8 9px,#b9c6db 13px)"></div>
<div class="abs" style="left:916px;top:240px;width:8px;height:8px;background:repeating-linear-gradient(#6a7b9a 0,#6a7b9a 1px,transparent 1px,transparent 2px)"></div>
<svg class="abs" style="left:915px;top:515px" width="10" height="6" viewBox="0 0 10 6"><path d="M0 .5 L5 5.500 L10 .5Z" fill="#3e4f7e"/></svg>
<!-- browse buttons -->
<div class="abs" style="left:911px;top:527px;width:17px;height:51px;background:#a7c5f0"></div>
<svg class="abs" style="left:916px;top:531px" width="8" height="8" viewBox="0 0 8 8"><path d="M0 4 L4 0 L8 4Z M0 8 L4 4 L8 8Z" fill="#1a1a22"/><rect x="0" y="3.500" width="8" height="1" fill="#1a1a22"/></svg>
<svg class="abs" style="left:915px;top:547px" width="9" height="9" viewBox="0 0 9 9"><defs><radialGradient id="bb" cx="40%" cy="35%"><stop offset="0" stop-color="#f4f4f4"/><stop offset="1" stop-color="#8e8e8e"/></radialGradient></defs><circle cx="4.500" cy="4.500" r="3.700" fill="url(#bb)" stroke="#444" stroke-width=".9"/></svg>
<svg class="abs" style="left:916px;top:565px" width="8" height="8" viewBox="0 0 8 8"><path d="M0 0 L4 4 L8 0Z M0 4 L4 8 L8 4Z" fill="#1a1a22"/><rect x="0" y="3.500" width="8" height="1" fill="#1a1a22"/></svg>

<div id="status"></div>
<!-- status separators -->
<div class="abs" style="left:94px;top:581px;width:1px;height:17px;background:#8fb0e0;box-shadow:1px 0 0 #e8f0fb"></div>
<div class="abs" style="left:166px;top:581px;width:1px;height:17px;background:#8fb0e0;box-shadow:1px 0 0 #e8f0fb"></div>
<div class="abs" style="left:376px;top:581px;width:1px;height:17px;background:#8fb0e0;box-shadow:1px 0 0 #e8f0fb"></div>
<div class="abs" style="left:410px;top:581px;width:1px;height:17px;background:#8fb0e0;box-shadow:1px 0 0 #e8f0fb"></div>
<div class="abs" style="left:646px;top:581px;width:1px;height:17px;background:#8fb0e0;box-shadow:1px 0 0 #e8f0fb"></div>
<!-- proofing icon -->
<svg class="abs" style="left:174px;top:580px" width="20" height="18" viewBox="0 0 20 18">
<path d="M1 10 L8 6 L15 9.500 L8 14Z" fill="#fbfcfe" stroke="#4a5875" stroke-width=".9"/>
<path d="M1 10 V12 L8 16.500 L15 12 V9.500 L8 14Z" fill="#5f86cc" stroke="#34508a" stroke-width=".8"/>
<path d="M2 11.200 L8 15.200 L14 11.200" fill="none" stroke="#e6edf8" stroke-width=".9"/>
<path d="M8 6 V14" stroke="#7a89a5" stroke-width=".7"/>
<path d="M10 2.500 L16.500 10 M16.500 2.500 L10 10" stroke="#e2352a" stroke-width="2.200" stroke-linecap="round"/>
</svg>
<!-- macro icon -->
<svg class="abs" style="left:385px;top:582px" width="16" height="14" viewBox="0 0 16 14">
<rect x=".5" y=".5" width="14.500" height="12.500" fill="#f6f8fc" stroke="#5b6b88" stroke-width="1"/>
<rect x=".5" y=".5" width="14.500" height="3" fill="#6b93e0"/>
<circle cx="4" cy="4" r="2.300" fill="#e8432c" stroke="#fff" stroke-width=".6"/>
<g fill="#9cb0d2"><rect x="3" y="7" width="10" height="1"/><rect x="3" y="9.500" width="10" height="1"/><rect x="8" y="4.800" width="5" height="1"/></g>
</svg>
<!-- view buttons -->
<div class="abs" style="left:652px;top:580px;width:93px;height:19px;border:1px solid #94b3dd;border-radius:2px;background:linear-gradient(#dfeafa,#c4d9f5)"></div>
<div class="abs" style="left:653px;top:581px;width:19px;height:17px;border:1px solid #d09a3a;background:linear-gradient(#fde7b0,#f9c25a 50%,#fbd98a)"></div>
<svg class="abs" style="left:656px;top:583px" width="13" height="13" viewBox="0 0 13 13"><rect x="1.500" y=".5" width="10" height="12" fill="#fff" stroke="#444d60" stroke-width="1"/><g fill="#4a566e"><rect x="3.500" y="3" width="6" height="1"/><rect x="3.500" y="5" width="6" height="1"/><rect x="3.500" y="7" width="6" height="1"/><rect x="3.500" y="9" width="6" height="1"/></g></svg>
<svg class="abs" style="left:674px;top:583px" width="14" height="13" viewBox="0 0 14 13"><path d="M1 2 Q4 .5 7 2 Q10 .5 13 2 V11.500 Q10 10 7 11.500 Q4 10 1 11.500Z" fill="#fff" stroke="#444d60" stroke-width="1"/><path d="M7 2 V11.500" stroke="#444d60" stroke-width="1"/><g fill="#6a768e"><rect x="2.500" y="4" width="3" height=".9"/><rect x="2.500" y="6" width="3" height=".9"/><rect x="2.500" y="8" width="3" height=".9"/><rect x="8.500" y="4" width="3" height=".9"/><rect x="8.500" y="6" width="3" height=".9"/><rect x="8.500" y="8" width="3" height=".9"/></g></svg>
<svg class="abs" style="left:692px;top:583px" width="15" height="14" viewBox="0 0 15 14"><rect x=".5" y=".5" width="10" height="9" fill="#fff" stroke="#444d60" stroke-width="1"/><g fill="#6a768e"><rect x="2" y="2.500" width="7" height="1"/><rect x="2" y="4.500" width="7" height="1"/><rect x="2" y="6.500" width="4" height="1"/></g><circle cx="10.500" cy="9.500" r="3.600" fill="#3b86d8" stroke="#1d4b8e" stroke-width=".7"/><path d="M8.500 8 Q10.500 7 11.500 9 L10 11 L8.500 10Z" fill="#58b044"/></svg>
<svg class="abs" style="left:711px;top:584px" width="13" height="12" viewBox="0 0 13 12"><g fill="#6a768e"><rect x="1" y="1" width="9" height="1"/><rect x="4" y="3.500" width="8" height="1"/><rect x="4" y="6" width="8" height="1"/><rect x="6" y="8.500" width="6" height="1"/><rect x="1" y="10.500" width="8" height="1" opacity=".6"/></g><rect x="1" y="3" width="2" height="2" fill="#9fb0cc"/><rect x="3" y="8" width="2" height="2" fill="#9fb0cc"/></svg>
<svg class="abs" style="left:729px;top:584px" width="13" height="12" viewBox="0 0 13 12"><g fill="#3c465a"><rect x="1" y="1" width="11" height="1.200"/><rect x="1" y="3.500" width="11" height="1.200"/><rect x="1" y="6" width="11" height="1.200"/><rect x="1" y="8.500" width="11" height="1.200"/></g></svg>
<!-- zoom slider -->
<div class="abs" style="left:805px;top:588px;width:102px;height:1px;background:#5d78a8;box-shadow:0 1px 0 #eef4fc"></div>
<svg class="abs" style="left:788px;top:580px" width="18" height="18" viewBox="0 0 18 18"><defs><linearGradient id="zb" x1="0" y1="0" x2="0" y2="1"><stop offset="0" stop-color="#fafcff"/><stop offset=".5" stop-color="#dfe8f5"/><stop offset="1" stop-color="#c4d2e8"/></linearGradient></defs><circle cx="9" cy="9" r="7.800" fill="url(#zb)" stroke="#6d86b0" stroke-width="1"/><rect x="5" y="8" width="8" height="2" fill="#44546f"/></svg>
<svg class="abs" style="left:906px;top:580px" width="18" height="18" viewBox="0 0 18 18"><circle cx="9" cy="9" r="7.800" fill="url(#zb)" stroke="#6d86b0" stroke-width="1"/><rect x="5" y="8" width="8" height="2" fill="#44546f"/><rect x="8" y="5" width="2" height="8" fill="#44546f"/></svg>
<svg class="abs" style="left:850px;top:581px" width="11" height="15" viewBox="0 0 11 15"><path d="M1.500 1 H9.500 V9.500 L5.500 14 L1.500 9.500Z" fill="#eef3fa" stroke="#56698f" stroke-width="1"/><path d="M3.500 3 H7.500 V9 L5.500 11.300 L3.500 9Z" fill="#c9d6ea"/></svg>

<div class="t" id="r0" style="left:29.5px;top:57.5px;letter-spacing:-0.299px;">Εξώφυλλο</div>
<div class="t" id="r1" style="left:29.5px;top:79.5px;letter-spacing:-0.241px;">Κενή σελίδα</div>
<div class="t" id="r2" style="left:29.5px;top:101.5px;letter-spacing:-0.276px;">Αλλαγή σελίδας</div>
<div class="t" id="r3" style="left:126.0px;top:92.0px;letter-spacing:-0.057px;">Πίνακας</div>
<div class="t" id="r4" style="left:184.5px;top:92.0px;letter-spacing:-0.028px;">Εικόνα</div>
<div class="t" id="r5" style="left:245.5px;top:92.0px;letter-spacing:-0.312px;">Έτοιμες</div>
<div class="t" id="r6" style="left:225.5px;top:104.5px;letter-spacing:-0.113px;">εικόνες Clip Art</div>
<div class="t" id="r7" style="left:329.0px;top:57.5px;letter-spacing:0.375px;">Σχήματα</div>
<div class="t" id="r8" style="left:329.0px;top:79.5px;letter-spacing:-0.478px;">SmartArt</div>
<div class="t" id="r9" style="left:329.0px;top:101.5px;letter-spacing:0.052px;">Γράφημα</div>
<div class="t" id="r10" style="left:395.5px;top:92.0px;letter-spacing:-0.152px;">Συνδέσεις</div>
<div class="t" id="r11" style="left:477.5px;top:57.5px;letter-spacing:-0.051px;">Κεφαλίδα</div>
<div class="t" id="r12" style="left:477.5px;top:79.5px;letter-spacing:-0.508px;">Υποσέλιδο</div>
<div class="t" id="r13" style="left:477.5px;top:101.5px;letter-spacing:-0.122px;">Αριθμός σελίδας</div>
<div class="t" id="r14" style="left:595.5px;top:92.0px;letter-spacing:-0.141px;">Πλαίσιο</div>
<div class="t" id="r15" style="left:589.0px;top:104.5px;letter-spacing:0.283px;">κειμένου</div>
<div class="t" id="r16" style="left:668.0px;top:57.5px;letter-spacing:-0.040px;">Γρήγορα Τμήματα</div>
<div class="t" id="r17" style="left:668.0px;top:79.5px;letter-spacing:0.117px;">WordArt</div>
<div class="t" id="r18" style="left:668.0px;top:101.5px;letter-spacing:0.019px;color:#8d9cb5">Αρχίγραμμα</div>
<div class="t" id="r19" style="left:839.5px;top:57.5px;letter-spacing:-0.384px;">Εξίσωση</div>
<div class="t" id="r20" style="left:839.5px;top:79.5px;letter-spacing:-0.189px;">Σύμβολο</div>
<div class="t" id="r21" style="left:42.5px;top:122.0px;letter-spacing:-0.292px;color:#3e6aaa">Σελίδες</div>
<div class="t" id="r22" style="left:128.0px;top:122.0px;letter-spacing:-0.151px;color:#3e6aaa">Πίνακες</div>
<div class="t" id="r23" style="left:252.5px;top:122.0px;letter-spacing:-0.155px;color:#3e6aaa">Απεικονίσεις</div>
<div class="t" id="r24" style="left:455.0px;top:122.0px;letter-spacing:-0.155px;color:#3e6aaa">Κεφαλίδες &amp; υποσέλιδα</div>
<div class="t" id="r25" style="left:678.3px;top:122.0px;letter-spacing:-0.461px;color:#3e6aaa">Κείμενο</div>
<div class="t" id="r26" style="left:836.0px;top:122.0px;letter-spacing:-0.250px;color:#3e6aaa">Σύμβολα</div>
<div class="t" id="r27" style="left:58.5px;top:31.5px;letter-spacing:-0.038px;">Κεντρική</div>
<div class="t" id="r28" style="left:133.5px;top:31.5px;letter-spacing:-0.295px;">Εισαγωγή</div>
<div class="t" id="r29" style="left:212.5px;top:31.5px;letter-spacing:-0.096px;">Διάταξη σελίδας</div>
<div class="t" id="r30" style="left:324.5px;top:31.5px;letter-spacing:0.123px;">Αναφορές</div>
<div class="t" id="r31" style="left:406.5px;top:31.5px;letter-spacing:-0.018px;">Στοιχεία αλληλογραφίας</div>
<div class="t" id="r32" style="left:560.5px;top:31.5px;letter-spacing:0.033px;">Αναθεώρηση</div>
<div class="t" id="r33" style="left:658.5px;top:31.5px;letter-spacing:-0.031px;">Προβολή</div>
<div class="t" id="r34" style="left:734.5px;top:31.5px;letter-spacing:0.092px;">Προγραμματιστής</div>
<div class="t" id="r35" style="left:397.9px;top:6.5px;letter-spacing:0.193px;color:#6b7990;font-size:12.5px">μάρκος -</div>
<div class="t" id="r36" style="left:451.3px;top:6.5px;letter-spacing:-0.064px;color:#6480b3;font-size:12.5px">Microsoft Word</div>
<div class="t" id="r37" style="left:8.5px;top:582.0px;letter-spacing:-0.224px;font-size:11.5px">Σελίδα: 1 από 1</div>
<div class="t" id="r38" style="left:103.5px;top:582.0px;letter-spacing:-0.177px;font-size:11.5px">Λέξεις: 160</div>
<div class="t" id="r39" style="left:207.5px;top:582.0px;letter-spacing:-0.308px;font-size:11.5px">Ελληνικά (Ελλάδας)</div>
<div class="t" id="r40" style="left:751.5px;top:582.0px;letter-spacing:-0.141px;font-size:11.5px">100%</div>
</body></html>
